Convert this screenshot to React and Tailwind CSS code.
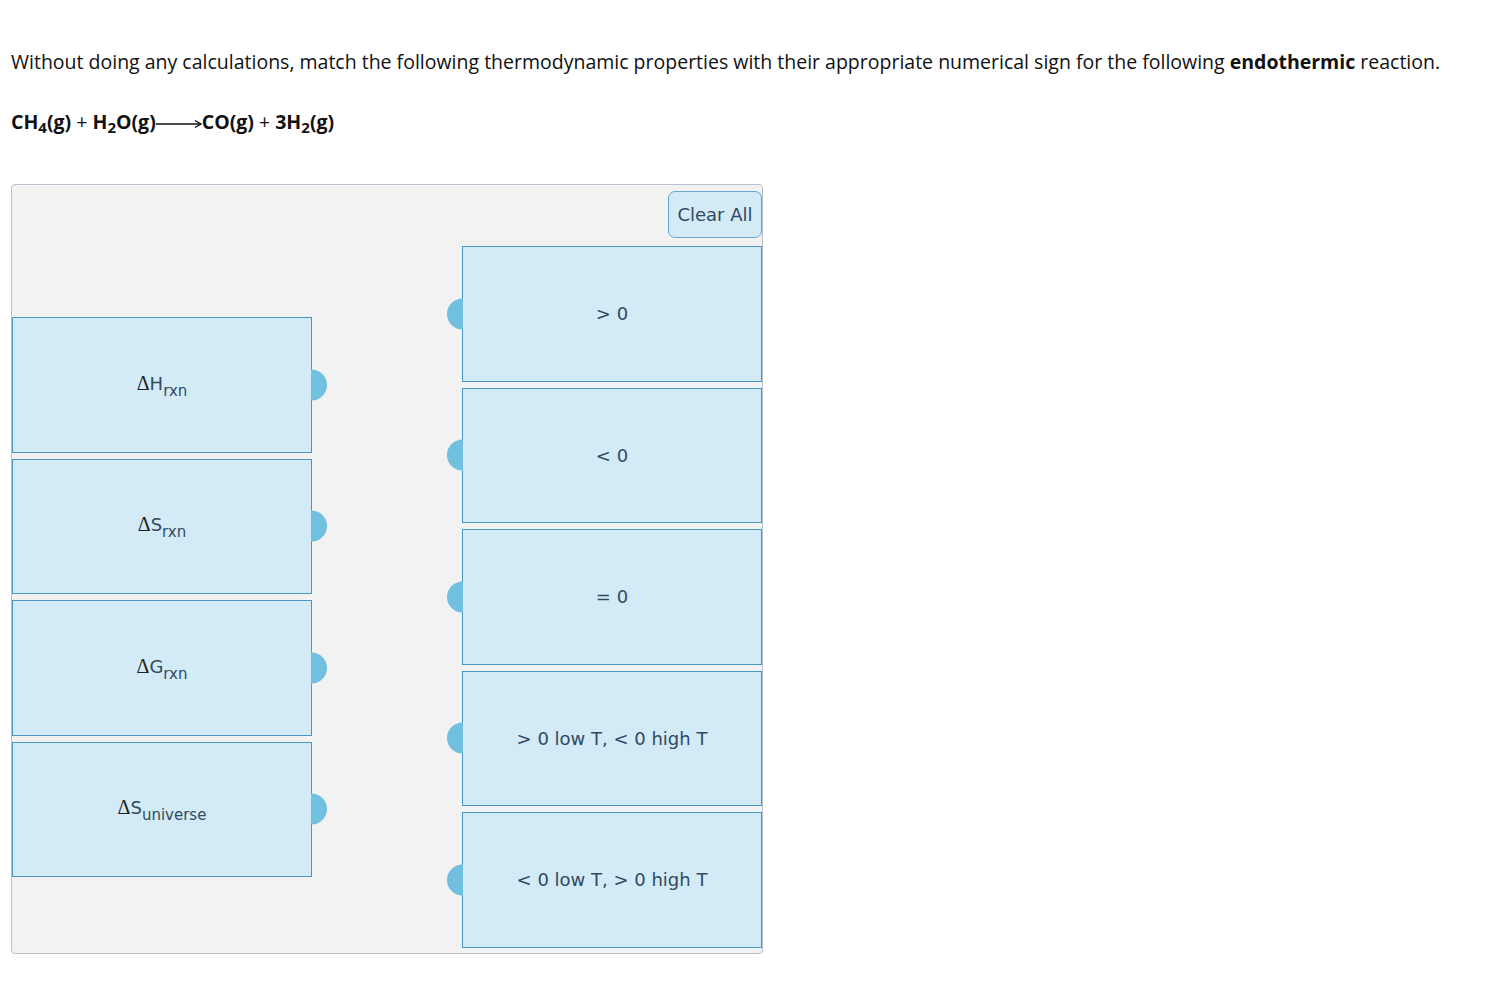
import React from "react";

const left = [
  { sym: "H", sub: "rxn" },
  { sym: "S", sub: "rxn" },
  { sym: "G", sub: "rxn" },
  { sym: "S", sub: "universe" },
];
const right = ["> 0", "< 0", "= 0", "> 0 low T, < 0 high T", "< 0 low T, > 0 high T"];

function Arrow() {
  return (
    <svg width="46" height="10" viewBox="0 0 46 10" className="inline-block align-middle">
      <line x1="0" y1="5" x2="44" y2="5" stroke="#111" strokeWidth="1.3" />
      <path d="M39 1.5 L45 5 L39 8.5" fill="none" stroke="#111" strokeWidth="1.3" />
    </svg>
  );
}

export default function App() {
  return (
    <div className="bg-white w-[1500px] h-[982px] pt-[47px] pl-[11px] font-['Open_Sans',sans-serif]">
      <p className="text-[19.5px] leading-[30px] text-[#111]">
        Without doing any calculations, match the following thermodynamic properties with their appropriate numerical sign for the following <b>endothermic</b> reaction.
      </p>
      <p className="mt-[30px] text-[19.5px] leading-[30px] font-bold text-[#111]">
        CH<sub className="text-[15px]">4</sub>(g) <span className="font-normal">+</span> H<sub className="text-[15px]">2</sub>O(g)<Arrow />CO(g) <span className="font-normal">+</span> 3H<sub className="text-[15px]">2</sub>(g)
      </p>
      <div className="mt-[47px] w-[752px] h-[770px] border border-[#b7c1cc] rounded-[4px] bg-[#f2f2f2] flex font-['DejaVu_Sans',sans-serif]">
        <div className="mt-[132px] flex flex-col gap-[6px]">
          {left.map((l, i) => (
            <div key={i} className="relative w-[300px] h-[135.5px] bg-[#d3eaf7] border border-[#4a97c2] flex items-center justify-center">
              <span className="text-[18px] text-[#2f4a62] mb-[4px]">
                <span className="text-[#222] text-[20px] font-['Liberation_Serif',serif]">Δ</span>{l.sym}<sub className="text-[15px] align-[-2px]">{l.sub}</sub>
              </span>
              <div className="absolute right-[-16px] top-1/2 -translate-y-1/2 w-[16px] h-[31px] rounded-r-full bg-[#72c0e0]" />
            </div>
          ))}
        </div>
        <div className="ml-[150px] flex flex-col items-end">
          <button className="mt-[6px] w-[94px] h-[47px] rounded-[7px] border border-[#6aa6cc] bg-[#d3eaf7] text-[18px] text-[#2f4a62]">
            Clear All
          </button>
          <div className="mt-[8px] flex flex-col gap-[6px]">
            {right.map((r, i) => (
              <div key={i} className="relative w-[300px] h-[135.5px] bg-[#d3eaf7] border border-[#4a97c2] flex items-center justify-center">
                <span className="text-[18px] text-[#2f4a62]">{r}</span>
                <div className="absolute left-[-16px] top-1/2 -translate-y-1/2 w-[16px] h-[31px] rounded-l-full bg-[#72c0e0]" />
              </div>
            ))}
          </div>
        </div>
      </div>
    </div>
  );
}
